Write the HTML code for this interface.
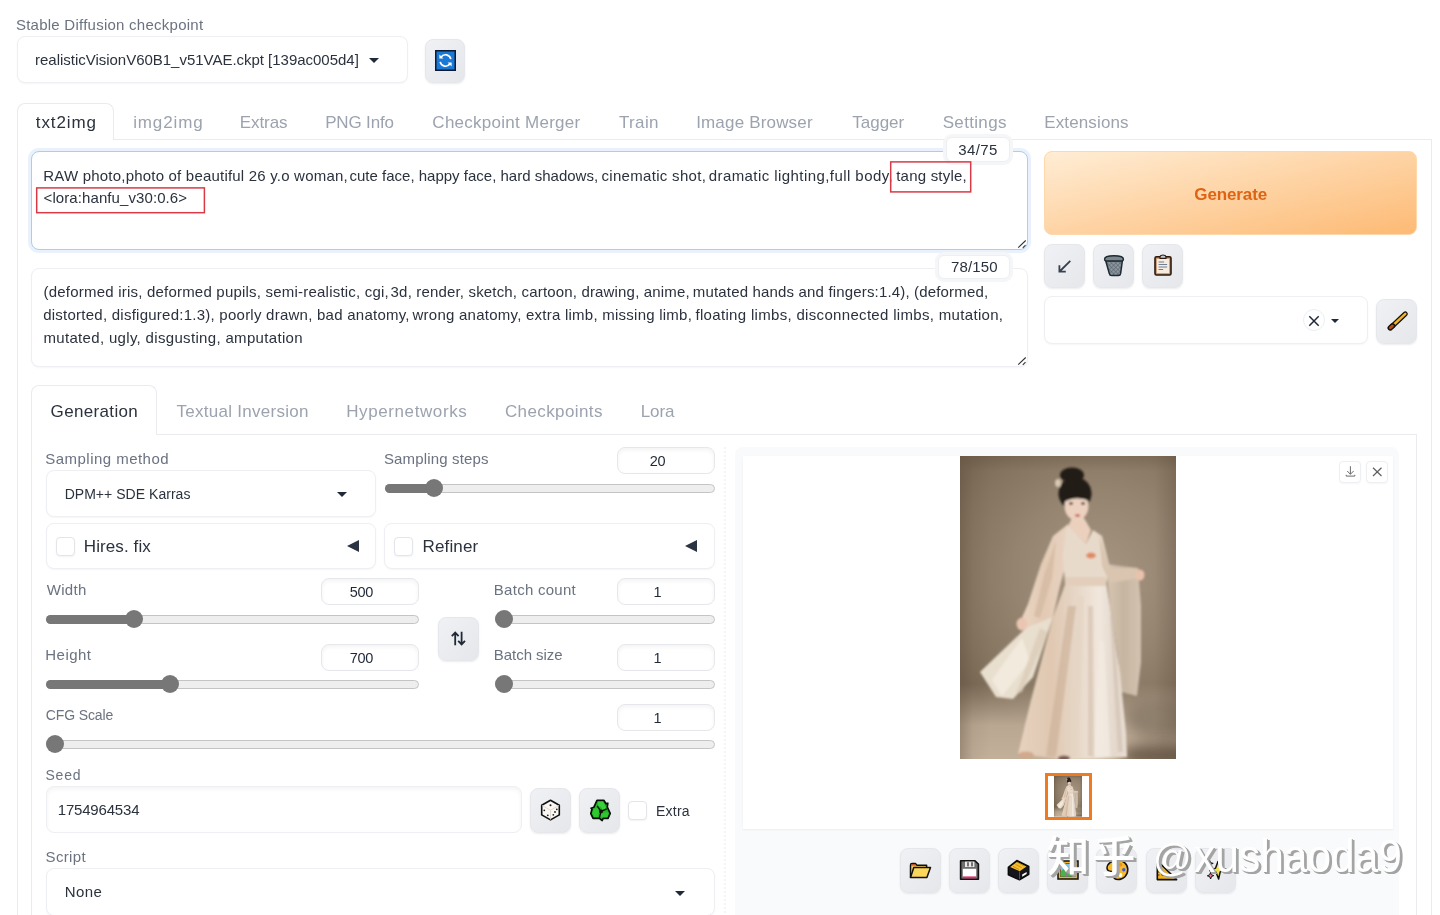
<!DOCTYPE html>
<html lang="en">
<head>
<meta charset="utf-8">
<title>Stable Diffusion</title>
<style>
*{box-sizing:border-box;margin:0;padding:0}
html,body{width:1440px;height:915px;overflow:hidden;background:#fff}
body{opacity:.999}
body{position:relative;font-family:"Liberation Sans","Noto Sans CJK SC",sans-serif;font-size:15px;color:#2b323e}
.a{position:absolute}
.t{position:absolute;white-space:nowrap;line-height:20px;height:20px}
.lbl{color:#6b7280}
.box{position:absolute;background:#fff;border:1px solid #edeff2;border-radius:8px;box-shadow:0 1px 2px rgba(0,0,0,.04)}
.btn{position:absolute;border:1px solid #e5e7eb;border-radius:8px;background:linear-gradient(to bottom right,#f0f1f4,#e5e7eb);box-shadow:0 1px 2px rgba(0,0,0,.08)}
.tab{position:absolute;white-space:nowrap;font-size:17px;line-height:22px;height:22px;color:#9ca3af}
.tab.on{color:#2b323e}
.num{position:absolute;background:#fff;border:1px solid #e5e7eb;border-radius:8px;box-shadow:inset 0 2px 4px rgba(0,0,0,.05);text-align:center;font-size:14.5px;letter-spacing:-.3px;padding-right:17px;line-height:26px;height:27px;color:#1f2937}
.track{position:absolute;height:9px;border-radius:4.5px;background:#eee;border:1px solid #c4c4c4}
.fill{position:absolute;height:9px;border-radius:4.5px;background:#777}
.knob{position:absolute;width:18px;height:18px;border-radius:50%;background:#777}
.chk{position:absolute;width:19px;height:19px;border:1px solid #e2e5e9;border-radius:4px;background:#fff;box-shadow:0 1px 2px rgba(0,0,0,.05)}
.caret{position:absolute;width:0;height:0;border-left:5px solid transparent;border-right:5px solid transparent;border-top:5px solid #1f2937}
.tri{position:absolute;width:0;height:0;border-top:6.5px solid transparent;border-bottom:6.5px solid transparent;border-right:12px solid #2b3442}
</style>
</head>
<body>
<!-- TOP -->
<div class="t lbl" id="l_ckpt" style="top:15px;letter-spacing:0.249px;left:15.93px">Stable Diffusion checkpoint</div>
<div class="box" id="ckpt" style="left:17px;top:36px;width:391px;height:47px"></div>
<div class="t" id="t_ckpt" style="top:50px;letter-spacing:-0.021px;left:35.08px">realisticVisionV60B1_v51VAE.ckpt [139ac005d4]</div>
<div class="caret" style="left:369px;top:58px"></div>
<div class="btn" id="refresh" style="left:425px;top:39px;width:40px;height:44px"></div>
<!-- MAIN TABS -->
<div class="a" id="tabline" style="left:17px;top:139px;width:1415px;height:1px;background:#e9ebee"></div>
<div class="a" id="tableft" style="left:17px;top:139px;width:1px;height:780px;background:#e9ebee"></div>
<div class="a" id="tabright" style="left:1431px;top:139px;width:1px;height:780px;background:#e9ebee"></div>
<div class="a" id="tabon" style="left:17px;top:103px;width:97px;height:37px;border:1px solid #e9ebee;border-bottom:none;border-radius:8px 8px 0 0;background:#fff"></div>
<div class="tab on" id="tb0" style="top:112px;letter-spacing:0.897px;left:35.80px">txt2img</div>
<div class="tab" id="tb1" style="top:112px;letter-spacing:0.873px;left:133.15px">img2img</div>
<div class="tab" id="tb2" style="top:112px;letter-spacing:-0.074px;left:239.77px">Extras</div>
<div class="tab" id="tb3" style="top:112px;letter-spacing:-0.154px;left:325.18px">PNG Info</div>
<div class="tab" id="tb4" style="top:112px;letter-spacing:0.261px;left:432.35px">Checkpoint Merger</div>
<div class="tab" id="tb5" style="top:112px;letter-spacing:0.364px;left:618.98px">Train</div>
<div class="tab" id="tb6" style="top:112px;letter-spacing:0.177px;left:696.14px">Image Browser</div>
<div class="tab" id="tb7" style="top:112px;letter-spacing:-0.033px;left:852.34px">Tagger</div>
<div class="tab" id="tb8" style="top:112px;letter-spacing:0.339px;left:942.67px">Settings</div>
<div class="tab" id="tb9" style="top:112px;letter-spacing:0.138px;left:1044.18px">Extensions</div>
<!-- PROMPTS -->
<div class="box" id="prompt" style="left:31px;top:151px;width:997px;height:99px;border-color:#acccf0;box-shadow:0 0 0 3px #e8f1fc"></div>
<div class="t" id="p1a" style="top:166px;letter-spacing:0.203px;left:43.32px">RAW photo,photo of beautiful 26 y.o woman,</div>
<div class="t" id="p1b" style="top:166px;letter-spacing:0.005px;left:349.47px">cute face, happy face, hard shadows,</div>
<div class="t" id="p1c" style="top:166px;letter-spacing:0.308px;left:601.47px">cinematic shot,</div>
<div class="t" id="p1d" style="top:166px;letter-spacing:0.433px;left:708.68px">dramatic lighting,full body,</div>
<div class="t" id="p1e" style="top:166px;letter-spacing:0.213px;left:896.21px">tang style,</div>
<div class="t" id="p2" style="top:188px;letter-spacing:0.089px;left:43.56px">&lt;lora:hanfu_v30:0.6&gt;</div>
<svg class="a" id="red1" style="z-index:5;left:889px;top:160px" width="84" height="34"><rect x="1.700" y="1.900" width="80" height="30" fill="none" stroke="#d93a45" stroke-width="1.500"/></svg>
<svg class="a" id="red2" style="z-index:5;left:35px;top:186px" width="172" height="29"><rect x="1.700" y="1.900" width="167.700" height="24.800" fill="none" stroke="#d93a45" stroke-width="1.500"/></svg>
<div class="box" id="cnt1" style="left:946px;top:137px;width:64px;height:25px;border-radius:6px;box-shadow:0 0 0 3px #f5f6f8"></div>
<div class="t" id="t_cnt1" style="top:140px;letter-spacing:0.373px;left:958.22px">34/75</div>
<div class="box" id="neg" style="left:31px;top:268px;width:997px;height:99px"></div>
<div class="t" id="n1a" style="top:282px;letter-spacing:0.211px;left:43.50px">(deformed iris, deformed pupils, semi-realistic, cgi,</div>
<div class="t" id="n1b" style="top:282px;letter-spacing:0.168px;left:390.61px">3d, render, sketch, cartoon, drawing, anime,</div>
<div class="t" id="n1c" style="top:282px;letter-spacing:0.166px;left:692.82px">mutated hands and fingers:1.4), (deformed,</div>
<div class="t" id="n2a" style="top:305px;letter-spacing:0.247px;left:43.19px">distorted, disfigured:1.3), poorly drawn, bad anatomy,</div>
<div class="t" id="n2b" style="top:305px;letter-spacing:0.245px;left:412.50px">wrong anatomy, extra limb, missing limb,</div>
<div class="t" id="n2c" style="top:305px;letter-spacing:0.320px;left:695.47px">floating limbs, disconnected limbs, mutation,</div>
<div class="t" id="n3" style="top:328px;letter-spacing:0.329px;left:43.40px">mutated, ugly, disgusting, amputation</div>
<div class="box" id="cnt2" style="left:938px;top:255px;width:72px;height:24px;border-radius:6px;box-shadow:0 0 0 3px #f5f6f8"></div>
<div class="t" id="t_cnt2" style="top:257px;letter-spacing:0.109px;left:951.05px">78/150</div>
<svg class="a" style="left:1016px;top:238px" width="12" height="12" viewBox="0 0 12 12"><path d="M2.200 9.700L9.700 2.500M6.800 9.800L9.500 7.200" stroke="#333" stroke-width="1.100" fill="none"/></svg>
<svg class="a" style="left:1016px;top:355px" width="12" height="12" viewBox="0 0 12 12"><path d="M2.200 9.700L9.700 2.500M6.800 9.800L9.500 7.200" stroke="#333" stroke-width="1.100" fill="none"/></svg>
<!-- GENERATE -->
<div class="a" id="gen" style="left:1044px;top:151px;width:373px;height:84px;border-radius:8px;border:1px solid #fed7aa;background:linear-gradient(to bottom right,#ffedd5,#fdba74)"></div>
<div class="t" id="t_gen" style="font-weight:bold;font-size:17px;color:#df6314;top:185px;letter-spacing:-0.118px;left:1194.33px">Generate</div>
<div class="btn" id="b1" style="left:1044px;top:244px;width:41px;height:44px"></div>
<div class="btn" id="b2" style="left:1093px;top:244px;width:41px;height:44px"></div>
<div class="btn" id="b3" style="left:1142px;top:244px;width:41px;height:44px"></div>
<div class="box" id="styles" style="left:1044px;top:296px;width:324px;height:48px"></div>
<div class="a" id="xcirc" style="left:1303px;top:309px;width:22px;height:22px;border-radius:50%;border:1px solid #eceef1;background:#fff"></div>
<div class="caret" style="left:1330.5px;top:319px;border-left-width:4px;border-right-width:4px;border-top-width:4.500px"></div>
<div class="btn" id="b4" style="left:1376px;top:299px;width:41px;height:45px"></div>
<!-- SUB TABS -->
<div class="a" id="subline" style="left:31px;top:434px;width:1386px;height:1px;background:#e9ebee"></div>
<div class="a" id="subleft" style="left:31px;top:434px;width:1px;height:500px;background:#e9ebee"></div>
<div class="a" id="subright" style="left:1416px;top:434px;width:1px;height:500px;background:#e9ebee"></div>
<div class="a" id="subon" style="left:31px;top:385px;width:126px;height:50px;border:1px solid #e9ebee;border-bottom:none;border-radius:8px 8px 0 0;background:#fff"></div>
<div class="tab on" id="st0" style="top:401px;letter-spacing:0.336px;left:50.61px">Generation</div>
<div class="tab" id="st1" style="top:401px;letter-spacing:0.275px;left:176.47px">Textual Inversion</div>
<div class="tab" id="st2" style="top:401px;letter-spacing:0.602px;left:346.18px">Hypernetworks</div>
<div class="tab" id="st3" style="top:401px;letter-spacing:0.404px;left:504.89px">Checkpoints</div>
<div class="tab" id="st4" style="top:401px;letter-spacing:-0.139px;left:640.77px">Lora</div>
<!--LEFT-->
<div class="t lbl" id="l_sm" style="top:449px;letter-spacing:0.466px;left:45.32px">Sampling method</div>
<div class="box" id="sampler" style="left:46px;top:470px;width:330px;height:47px"></div>
<div class="t" id="t_sampler" style="font-size:14px;top:484px;letter-spacing:0.034px;left:64.67px">DPM++ SDE Karras</div>
<div class="caret" style="left:337px;top:492px"></div>
<div class="t lbl" id="l_ss" style="top:449px;letter-spacing:0.152px;left:383.93px">Sampling steps</div>
<div class="num" id="n_ss" style="left:617px;top:447px;width:98px">20</div>
<div class="track" style="left:385px;top:484px;width:330px"></div>
<div class="fill" style="left:385px;top:484px;width:50px"></div>
<div class="knob" style="left:425px;top:479px"></div>

<div class="box" id="hires" style="left:46px;top:523px;width:330px;height:46px"></div>
<div class="chk" style="left:56px;top:537px"></div>
<div class="t" id="t_hires" style="font-size:17px;line-height:22px;height:22px;top:536px;letter-spacing:0.104px;left:83.77px">Hires. fix</div>
<div class="tri" style="left:347px;top:540px"></div>
<div class="box" id="refiner" style="left:384px;top:523px;width:331px;height:46px"></div>
<div class="chk" style="left:394px;top:537px"></div>
<div class="t" id="t_refiner" style="font-size:17px;line-height:22px;height:22px;top:536px;letter-spacing:0.156px;left:422.48px">Refiner</div>
<div class="tri" style="left:685px;top:540px"></div>

<div class="t lbl" id="l_w" style="top:580px;letter-spacing:0.358px;left:46.63px">Width</div>
<div class="num" id="n_w" style="left:321px;top:578px;width:98px">500</div>
<div class="track" style="left:46px;top:615px;width:373px"></div>
<div class="fill" style="left:46px;top:615px;width:90px"></div>
<div class="knob" style="left:125px;top:610px"></div>
<div class="t lbl" id="l_h" style="top:645px;letter-spacing:0.426px;left:45.37px">Height</div>
<div class="num" id="n_h" style="left:321px;top:644px;width:98px">700</div>
<div class="track" style="left:46px;top:680px;width:373px"></div>
<div class="fill" style="left:46px;top:680px;width:125px"></div>
<div class="knob" style="left:161px;top:675px"></div>
<div class="btn" id="swap" style="left:438px;top:617px;width:41px;height:44px"></div>
<div class="t lbl" id="l_bc" style="top:580px;letter-spacing:0.262px;left:493.83px">Batch count</div>
<div class="num" id="n_bc" style="left:617px;top:578px;width:98px">1</div>
<div class="track" style="left:495px;top:615px;width:220px"></div>
<div class="knob" style="left:495px;top:610px"></div>
<div class="t lbl" id="l_bs" style="top:645px;letter-spacing:-0.048px;left:493.83px">Batch size</div>
<div class="num" id="n_bs" style="left:617px;top:644px;width:98px">1</div>
<div class="track" style="left:495px;top:680px;width:220px"></div>
<div class="knob" style="left:495px;top:675px"></div>
<div class="t lbl" id="l_cfg" style="font-size:14px;top:705px;letter-spacing:-0.125px;left:45.78px">CFG Scale</div>
<div class="num" id="n_cfg" style="left:617px;top:704px;width:98px">1</div>
<div class="track" style="left:46px;top:740px;width:669px"></div>
<div class="knob" style="left:46px;top:735px"></div>
<div class="t lbl" id="l_seed" style="font-size:14px;top:765px;letter-spacing:0.755px;left:45.54px">Seed</div>
<div class="box" id="seed" style="left:46px;top:786px;width:476px;height:47px;box-shadow:inset 0 2px 4px rgba(0,0,0,.05)"></div>
<div class="t" id="t_seed" style="top:800px;letter-spacing:-0.186px;left:57.73px">1754964534</div>
<div class="btn" id="dice" style="left:530px;top:788px;width:41px;height:45px"></div>
<div class="btn" id="recy" style="left:579px;top:788px;width:41px;height:45px"></div>
<div class="chk" style="left:628px;top:801px"></div>
<div class="t" id="t_extra" style="font-size:14px;top:801px;letter-spacing:0.222px;left:656.02px">Extra</div>
<div class="t lbl" id="l_script" style="top:847px;letter-spacing:0.346px;left:45.54px">Script</div>
<div class="box" id="script" style="left:46px;top:868px;width:669px;height:48px"></div>
<div class="t" id="t_none" style="top:882px;letter-spacing:0.410px;left:64.67px">None</div>
<div class="caret" style="left:675px;top:891px"></div>
<!--RIGHT-->
<div class="a" id="dotline" style="left:724px;top:447px;width:0;height:470px;border-left:2px dotted #f3f4f6"></div>
<div class="a" id="gpanel" style="left:735px;top:447px;width:664px;height:480px;background:#f9fafb;border-radius:8px 8px 0 0"></div>
<div class="a" id="ginner" style="left:743px;top:456px;width:650px;height:373px;background:#fff;box-shadow:0 1px 2px rgba(0,0,0,.06)"></div>
<svg class="a" id="photo" style="left:960px;top:456px" width="216" height="303" viewBox="0 0 216 303">
<!--PHOTO-->
<defs>
<radialGradient id="pbg" gradientUnits="userSpaceOnUse" cx="135" cy="115" r="150"><stop offset="0" stop-color="#938370"/><stop offset="0.5" stop-color="#85756a" stop-opacity="0"/><stop offset="0.5" stop-color="#857563"/><stop offset="1" stop-color="#6a5a48"/></radialGradient>
<radialGradient id="pbg2" gradientUnits="userSpaceOnUse" cx="140" cy="120" r="170"><stop offset="0" stop-color="#a69581"/><stop offset="0.5" stop-color="#948470"/><stop offset="0.85" stop-color="#84745f"/><stop offset="1" stop-color="#796955"/></radialGradient>
<linearGradient id="pvl" x1="0" y1="0" x2="1" y2="0"><stop offset="0" stop-color="#5a4a39" stop-opacity=".35"/><stop offset="0.06" stop-color="#5a4a39" stop-opacity=".08"/><stop offset="0.14" stop-color="#5a4a39" stop-opacity="0"/><stop offset="0.9" stop-color="#5a4a39" stop-opacity="0"/><stop offset="1" stop-color="#5a4a39" stop-opacity=".3"/></linearGradient>
<linearGradient id="pvt" x1="0" y1="0" x2="0" y2="1"><stop offset="0" stop-color="#5a4a39" stop-opacity=".3"/><stop offset="0.05" stop-color="#5a4a39" stop-opacity="0"/></linearGradient>
<linearGradient id="pfl" gradientUnits="userSpaceOnUse" x1="0" y1="228" x2="0" y2="303"><stop offset="0" stop-color="#b9a792" stop-opacity="0"/><stop offset="0.55" stop-color="#bcaa95" stop-opacity=".95"/><stop offset="1" stop-color="#c2b09b" stop-opacity="1"/></linearGradient>
<linearGradient id="psk" gradientUnits="userSpaceOnUse" x1="58" y1="0" x2="168" y2="0"><stop offset="0" stop-color="#e6d2be"/><stop offset="0.3" stop-color="#e0c8b2"/><stop offset="0.52" stop-color="#e6d6c6"/><stop offset="0.74" stop-color="#f1e7dd"/><stop offset="0.88" stop-color="#e4d8cc"/><stop offset="1" stop-color="#eadfd4"/></linearGradient>
<linearGradient id="prb" gradientUnits="userSpaceOnUse" x1="60" y1="0" x2="108" y2="0"><stop offset="0" stop-color="#ead6c3"/><stop offset="0.5" stop-color="#e2cab5"/><stop offset="1" stop-color="#e8d3c0"/></linearGradient>
<linearGradient id="psl" gradientUnits="userSpaceOnUse" x1="148" y1="0" x2="182" y2="0"><stop offset="0" stop-color="#d6c4b0"/><stop offset="0.45" stop-color="#c6b5a1"/><stop offset="1" stop-color="#d3c3b0"/></linearGradient>
<filter id="pb1" x="-10%" y="-10%" width="120%" height="120%"><feGaussianBlur stdDeviation="1"/></filter>
<filter id="pb2" x="-30%" y="-30%" width="160%" height="160%"><feGaussianBlur stdDeviation="2.500"/></filter>
<filter id="pb3" x="-40%" y="-40%" width="180%" height="180%"><feGaussianBlur stdDeviation="7"/></filter>
<clipPath id="pcl"><rect width="216" height="303"/></clipPath>
</defs>
<g id="pg">
<g clip-path="url(#pcl)">
<rect width="216" height="303" fill="url(#pbg2)"/>
<rect y="225" width="216" height="80" fill="url(#pfl)"/>
<ellipse cx="200" cy="262" rx="34" ry="22" fill="#8f7f6d" filter="url(#pb3)"/>
<ellipse cx="198" cy="300" rx="38" ry="13" fill="#6f5f4d" filter="url(#pb3)"/>
<rect width="216" height="303" fill="url(#pvl)"/>
<rect width="216" height="303" fill="url(#pvt)"/>
<g filter="url(#pb1)">
<!-- right hanging sleeve -->
<path d="M146 108 L178 112 L181 150 L181 206 L177 240 L161 236 L158 200 L150 150 Z" fill="url(#psl)"/>
<!-- left outer robe -->
<path d="M107 69 L93 80 L81 108 L68 148 L60 166 L68 177 L93 161 L100 130 L108 100 Z" fill="url(#prb)"/>
<path d="M96 84 L84 120 L74 160 L80 162 L92 122 Z" fill="#d3b8a0" opacity=".7"/>
<!-- left hanging fabric -->
<path d="M66 172 L20 216 L36 241 L53 243 L73 221 L93 161 Z" fill="#e9dfcf"/>
<path d="M62 182 L32 224 L42 240 L70 205 Z" fill="#f3ecdf" opacity=".85"/>
<path d="M80 172 L56 238 L62 236 L88 176 Z" fill="#d9c9b4" opacity=".7"/>
<!-- skirt -->
<path d="M106 126 L146 126 L150 151 L160 217 L166 277 L167 301 L110 304 L58 298 L71 244 L93 161 Z" fill="url(#psk)"/>
<path d="M108 150 L86 300 L96 301 L116 150 Z" fill="#c8ab92" opacity=".55"/>
<path d="M118 140 L110 300 L118 301 L124 140 Z" fill="#e3d3c2" opacity=".6"/>
<path d="M128 150 L128 300 L134 301 L133 150 Z" fill="#cdb8a3" opacity=".5"/>
<path d="M139 185 L134 300 L150 300 L144 185 Z" fill="#f3eae1" opacity=".8"/>
<path d="M150 160 L158 296 L163 296 L153 160 Z" fill="#cfc0b0" opacity=".6"/>
<!-- bodice -->
<path d="M107 68 L126 88 L133 74 L142 80 L150 112 L146 128 L105 128 L103 100 Z" fill="#e8dacb"/>
<path d="M105 121 L146 121 L146 130 L105 130 Z" fill="#e2cebb"/>
<path d="M139 78 L150 112 L178 112 L181 122 L150 127 L142 110 Z" fill="#d9c5b0"/>
<!-- neck & chest -->
<path d="M112 62 L124 62 L131 74 L126 88 L108 70 Z" fill="#ebd0be"/>
<!-- hair -->
<ellipse cx="112" cy="19" rx="12" ry="7.500" fill="#231b18"/>
<ellipse cx="115" cy="37.500" rx="16.500" ry="16.500" fill="#231b18"/>
<!-- face -->
<ellipse cx="116.500" cy="50" rx="12" ry="14.500" fill="#ecd1c0"/>
<path d="M103 40 Q116 30 130 40 L130 45 Q116 39 104 46 Z" fill="#231b18"/>
<ellipse cx="111" cy="47.500" rx="2" ry="1.300" fill="#3a2a24"/>
<ellipse cx="123" cy="47.500" rx="2" ry="1.300" fill="#3a2a24"/>
<ellipse cx="117.500" cy="59.500" rx="2.600" ry="1.300" fill="#c4564e"/>
<!-- ornaments -->
<ellipse cx="98" cy="27" rx="3" ry="4" fill="#d9c8b4"/>
<ellipse cx="131" cy="99.500" rx="5" ry="3" fill="#e08a62"/>
<!-- hands -->
<ellipse cx="62" cy="168" rx="5.500" ry="6.500" fill="#eac6b2"/>
<ellipse cx="180" cy="119" rx="4.500" ry="5.500" fill="#e8c2ad"/>
<!-- feet -->
<ellipse cx="66" cy="299" rx="8" ry="3.500" fill="#d2a98c"/>
<ellipse cx="104" cy="302" rx="6" ry="2.500" fill="#7a5a52"/>
</g>
</g>
</g>
</svg>
<div class="a" id="thumb" style="left:1045px;top:773px;width:47px;height:47px;border:3px solid #ee7a22;background:#fff"></div>
<svg class="a" id="thumbimg" style="left:1053.500px;top:776px" width="28.400" height="40.600" viewBox="0 0 216 303" preserveAspectRatio="none">
<!--THUMB-->
<use href="#pg"/>
</svg>
<div class="box" id="dl" style="left:1339px;top:461px;width:22px;height:22px;border-radius:4px"></div>
<div class="box" id="cl" style="left:1366px;top:461px;width:22px;height:22px;border-radius:4px"></div>
<div class="btn" id="g1" style="left:900px;top:848px;width:41px;height:45px"></div>
<div class="btn" id="g2" style="left:949px;top:848px;width:41px;height:45px"></div>
<div class="btn" id="g3" style="left:998px;top:848px;width:41px;height:45px"></div>
<div class="btn" id="g4" style="left:1047px;top:848px;width:41px;height:45px"></div>
<div class="btn" id="g5" style="left:1096px;top:848px;width:41px;height:45px"></div>
<div class="btn" id="g6" style="left:1146px;top:848px;width:41px;height:45px"></div>
<div class="btn" id="g7" style="left:1195px;top:848px;width:41px;height:45px"></div>
<!--ICONS-->
<svg class="a" style="left:435px;top:50px" width="21" height="21" viewBox="0 0 21 21"><rect x=".75" y=".75" width="19.500" height="19.500" fill="#1a78d6" stroke="#0a1a33" stroke-width="1.500"/><g transform="translate(21 0) scale(-1 1)"><path d="M5.200 9.200A5.400 5.400 0 0 1 15 7.200" fill="none" stroke="#fff" stroke-width="1.700"/><path d="M15.800 11.800A5.400 5.400 0 0 1 6 13.800" fill="none" stroke="#fff" stroke-width="1.700"/><path d="M16.600 4.600v4h-4z" fill="#fff"/><path d="M4.400 16.400v-4h4z" fill="#fff"/></g></svg>
<svg class="a" style="left:1056px;top:258px" width="17" height="17" viewBox="0 0 17 17"><path d="M14.300 2.800L3.600 13.500M3.400 7.300v6.400h6.400" stroke="#374151" stroke-width="1.800" fill="none"/></svg>
<svg class="a" style="left:1103px;top:254px" width="22" height="23" viewBox="0 0 22 23"><defs><pattern id="mesh" width="3" height="3" patternUnits="userSpaceOnUse" patternTransform="rotate(45)"><rect width="3" height="3" fill="#8d989d"/><path d="M0 0h3M0 0v3" stroke="#4b5563" stroke-width=".9"/></pattern></defs><path d="M2.6 6.5h16.8l-1.8 13.2c-.2 1.2-1 1.9-2.2 1.9H8.6c-1.2 0-2-.7-2.2-1.900z" fill="url(#mesh)" stroke="#1f2933" stroke-width="1.5"/><path d="M1.600 5.200c0-2.200 4-3.400 9.400-3.400s9.400 1.200 9.400 3.400c0 1.100-.7 1.700-1.600 1.700H3.200c-.9 0-1.600-.6-1.600-1.700z" fill="#7c878c" stroke="#1f2933" stroke-width="1.5"/></svg>
<svg class="a" style="left:1154px;top:254px" width="18" height="22" viewBox="0 0 18 22"><rect x="1" y="2.800" width="16" height="18.200" rx="1.500" fill="#c98d5e" stroke="#2a1a12" stroke-width="1.600"/><rect x="2.800" y="4.800" width="12.400" height="14.400" fill="#f5ebe0"/><path d="M6 3.200c0-1.300 1.300-2.200 3-2.200s3 .9 3 2.200v1.200H6z" fill="#c7ccd1" stroke="#2a1a12" stroke-width="1.100"/><path d="M4.600 8h5.500M4.600 10.500h8.500M4.600 13h8.500M4.600 15.500h4.500" stroke="#6f7f8f" stroke-width="1.100"/></svg>
<svg class="a" style="left:1308px;top:315px" width="12" height="12" viewBox="0 0 12 12"><path d="M1.300 1.300l9.400 9.400M10.700 1.300l-9.400 9.400" stroke="#1f2937" stroke-width="1.500" fill="none"/></svg>
<svg class="a" style="left:1385px;top:310px" width="24" height="22" viewBox="0 0 24 22"><path d="M20.300 3.900L7 16.300" stroke="#15100a" stroke-width="5" stroke-linecap="round" fill="none"/><path d="M20.300 3.900L8 15.400" stroke="#f2b31d" stroke-width="2.600" stroke-linecap="round" fill="none"/><path d="M7.600 15.800L5.200 18" stroke="#15100a" stroke-width="5.400" stroke-linecap="round" fill="none"/><path d="M7.400 16L5.400 17.800" stroke="#b4511d" stroke-width="2.800" stroke-linecap="round" fill="none"/></svg>
<svg class="a" style="left:450px;top:630px" width="17" height="17" viewBox="0 0 17 17"><path d="M5.200 15.200V2.800M1.800 6.200l3.400-3.600 3.400 3.600M11.600 1.800v12.400M8.200 10.800l3.400 3.600 3.400-3.600" stroke="#1f2937" stroke-width="1.800" fill="none"/></svg>
<svg class="a" style="left:540px;top:799px" width="21" height="22" viewBox="0 0 21 22"><path d="M10.500 1.300l8.800 5v9.600l-8.800 5-8.800-5V6.300z" fill="#fbf7f4" stroke="#111" stroke-width="1.600" stroke-linejoin="round"/><path d="M1.900 6.400l8.600 4.800 8.600-4.800M10.500 11.200v9.500" stroke="#ddd0cc" stroke-width=".8" fill="none"/><g fill="#222"><circle cx="10.500" cy="6.300" r="1"/><circle cx="4.300" cy="11.300" r=".9"/><circle cx="7.800" cy="16.300" r=".9"/><circle cx="13.300" cy="15.800" r=".9"/><circle cx="16.800" cy="10.300" r=".9"/><circle cx="15" cy="13" r=".9"/></g></svg>
<svg class="a" style="left:590px;top:799px" width="22" height="23" viewBox="0 0 22 23"><path d="M7 1.300H13.800L16 4.800 17.800 4.200 17.300 8 20.200 14.400 18 19.400H13.200L12.100 21.500 9.500 19.400H3.100L.8 14.600 2 10.200 1.100 9.200 3.800 8.300z" fill="#22b522" stroke="#061006" stroke-width="1.700" stroke-linejoin="round"/><path d="M8 2.600h5l3 6.400-3 2.200-2.400-3.800-2.200.4z" fill="#3ad23a"/><path d="M3.600 10.200l3.600-1.400 2 4.200-1.600 5H4.200l-1.800-3.600z" fill="#30c730"/><path d="M12.200 14.200l5-1.200 1.400 2-1.400 3.200h-5.600l-1.600-1.600z" fill="#30c730"/><path d="M11 12.400L7.200 6.800M11 12.400l5.800-2.600M11 12.400l-1.600 6.400" stroke="#061006" stroke-width="1.300" fill="none"/><circle cx="11" cy="12.400" r="1.900" fill="#1a0a12"/></svg>
<svg class="a" style="left:909px;top:862px" width="23" height="17" viewBox="0 0 23 17"><path d="M1.500 15.500V3.200c0-1 .6-1.600 1.500-1.600h3.400l1.600 1.700h9.600v2.200" fill="#f7c948" stroke="#111" stroke-width="1.500" stroke-linejoin="round"/><path d="M2 2.300h4l1 1.200H2z" fill="#c0392b"/><path d="M1.500 15.500L4.800 5.600h16.700l-3.600 9.900z" fill="#fbd65a" stroke="#111" stroke-width="1.500" stroke-linejoin="round"/></svg>
<svg class="a" style="left:959px;top:859px" width="21" height="22" viewBox="0 0 21 22"><path d="M1.600 1.800h14.400l3.400 3.200v15.200H1.600z" fill="#6e6e6e" stroke="#111" stroke-width="1.600" stroke-linejoin="round"/><rect x="6" y="2.600" width="9.400" height="5.400" fill="#e8e8e8"/><rect x="8.200" y="3.200" width="1.600" height="4.200" fill="#555"/><rect x="12.200" y="3.200" width="1.600" height="4.200" fill="#555"/><rect x="3.800" y="9.800" width="13.400" height="8.400" fill="#fff"/><rect x="3.800" y="17.400" width="13.400" height="2" fill="#d6336c"/></svg>
<svg class="a" style="left:1007px;top:859px" width="23" height="22" viewBox="0 0 23 22"><path d="M1.300 8.300L9.800 1.500l12 5.800v8l-9.300 5.600L1.300 15.800z" fill="#15151c" stroke="#0a0a0a" stroke-width="1.400" stroke-linejoin="round"/><path d="M3.200 8L9.900 2.900l9.600 4.700-6.800 4.600z" fill="#f4be2c"/><path d="M6 7.300l6.200 3.200M8.500 5.400l6.200 3.200M11 3.800l6.200 3.200" stroke="#c98a10" stroke-width=".9"/><path d="M15.200 15.600l4.400-2.700v2.200l-4.400 2.700z" fill="#fff"/><path d="M12.500 12.400v8" stroke="#2d6a2d" stroke-width="1"/></svg>
<svg class="a" style="left:1057px;top:860px" width="22" height="20" viewBox="0 0 22 20"><rect x="1" y="1" width="20" height="18" fill="#f2b31d" stroke="#111" stroke-width="1.500"/><rect x="3.600" y="3.600" width="14.800" height="12.800" fill="#7cc4ee" stroke="#5a3b10" stroke-width=".7"/><path d="M3.600 16.400v-5l4-3.400 4 4.200 3-2.200 3.800 3v3.400z" fill="#4caf50"/><circle cx="14.500" cy="6.500" r="1.400" fill="#fff6c8"/><path d="M9 16.400l1-5 1 5z" fill="#b05cc0"/></svg>
<svg class="a" style="left:1105px;top:859px" width="24" height="22" viewBox="0 0 24 22"><path d="M12.500 1.200c5.800 0 10.300 4 10.300 9.400 0 5.600-4.400 10-9.800 10-2.500 0-4.200-1.200-4.200-3 0-1.500 1-2 1-3.200 0-1.300-1.300-2-3.300-2-2.200 0-4.500-.6-4.500-3.300C2 4.800 6.700 1.200 12.500 1.200z" fill="#f6bb2a" stroke="#111" stroke-width="1.500"/><circle cx="9.500" cy="5.600" r="1.700" fill="#e8503a"/><circle cx="15.600" cy="5.800" r="1.700" fill="#f08a24"/><circle cx="18.800" cy="10.800" r="1.700" fill="#3b5bdb"/><circle cx="15.500" cy="16" r="1.900" fill="#fff"/></svg>
<svg class="a" style="left:1156px;top:859px" width="22" height="22" viewBox="0 0 22 22"><path d="M1.300 1.800L20.600 20.600H1.300z" fill="#f2b31d" stroke="#111" stroke-width="1.600" stroke-linejoin="round"/><path d="M5.600 10.600l5.800 5.800H5.600z" fill="#1b1b1b"/><path d="M1.500 7h2M1.500 10h2M1.500 13h2M1.500 16h2" stroke="#111" stroke-width=".8"/></svg>
<svg class="a" style="left:1203px;top:857px" width="26" height="26" viewBox="0 0 26 26"><path d="M15 4.500l2 6.200 6.800 1.800-6.600 2.400-1.600 7.100-2.600-6.700-6.200-1.600 5.800-2.600z" fill="#f4e04d" stroke="#111" stroke-width="1.500" stroke-linejoin="round"/><path d="M6.500 3l1 2.600 2.700.8-2.600 1-1 2.800-1-2.700L3 6.600l2.600-1z" fill="#4dabf7" stroke="#111" stroke-width="1"/><path d="M7.500 15.500l.9 2.300 2.400.8-2.300.9-.9 2.500-.9-2.400-2.400-.8 2.300-.9z" fill="#f783ac" stroke="#111" stroke-width="1"/></svg>
<svg class="a" style="left:1344px;top:465px" width="13" height="13" viewBox="0 0 13 13"><path d="M6.400 1.200v8M3.200 6l3.200 3.300L9.600 6M2.200 9.800v1.300h8.600V9.800" stroke="#6b6b6b" stroke-width="1" fill="none"/></svg>
<svg class="a" style="left:1372px;top:467px" width="10" height="10" viewBox="0 0 10 10"><path d="M1 .8l8.500 8.200M9.500.8L1 9" stroke="#5f5f5f" stroke-width="1.200" fill="none"/></svg>
<!--/ICONS-->
<div class="a" id="wm" style="left:0;top:0;white-space:nowrap;color:#fff;text-shadow:3px 2.400px 0 #a4a4a4,2px 1.600px 0 #a4a4a4,1px .8px 0 #a4a4a4"><span class="a" id="wm1" style="left:1046.500px;top:827px;font-size:43px;line-height:60px;font-weight:500;letter-spacing:3px">知乎</span><span class="a" id="wm2" style="left:1153px;top:828px;font-size:38px;line-height:60px">@</span><span class="a" id="wm3" style="left:1194px;top:827px;font-size:45.500px;line-height:60px;transform-origin:0 50%;transform:scaleX(.934)">xushaoda9</span></div>
</body>
</html>
